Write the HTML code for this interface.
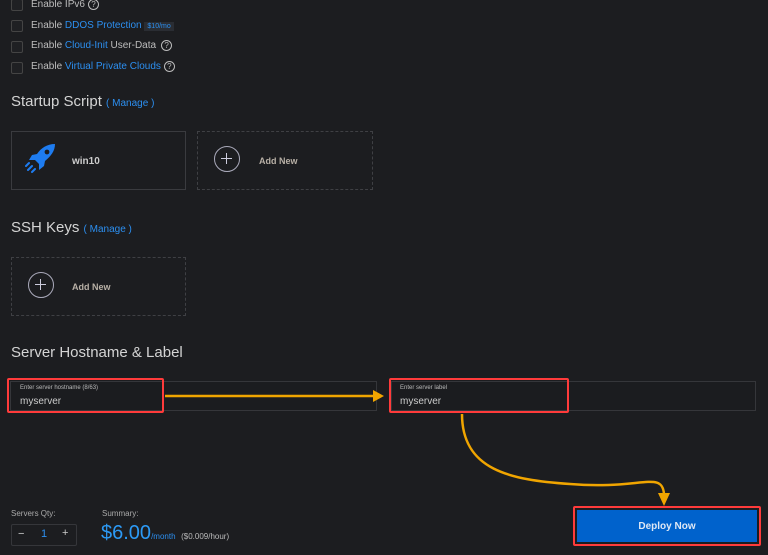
<!DOCTYPE html>
<html><head><meta charset="utf-8"><style>
*{box-sizing:border-box;margin:0;padding:0}
body{width:768px;height:555px;background:#1c1d20;font-family:"Liberation Sans",sans-serif;color:#c9c9c9;position:relative;overflow:hidden}
.a{position:absolute}
.cb{position:absolute;left:11px;width:12px;height:12px;border:1px solid #444;border-radius:2px;background:#1f2023}
.lbl{position:absolute;left:31px;font-size:10px;color:#bdbdbd;white-space:nowrap}
.blue{color:#2c8ff0}
.q{display:inline-block;width:11px;height:11px;border:1px solid #bbb;border-radius:50%;font-size:8px;text-align:center;line-height:9px;vertical-align:middle;margin-left:3px}
h2{position:absolute;left:11px;font-size:15px;font-weight:normal;color:#d4d4d4;white-space:nowrap}
h2 span{font-size:10px;color:#2c8ff0}
.card{position:absolute;border:1px solid #3a3b3f}
.dash{border:1px dashed #3f4044}
.plus{position:absolute;width:26px;height:26px;border:1.5px solid #aab;border-radius:50%}
.plus:before{content:"";position:absolute;left:6px;top:11px;width:11px;height:1.3px;background:#ccd}
.plus:after{content:"";position:absolute;left:11px;top:6px;width:1.3px;height:11px;background:#ccd}
.an{position:absolute;font-size:9px;font-weight:bold;color:#b8b0a6}
.inp{position:absolute;border:1px solid #35363a;background:#1b1c1f}
.red{position:absolute;border:2px solid #ff3b3b;border-radius:2px}
.sl{position:absolute;font-size:6px;color:#bbb}
.sv{position:absolute;font-size:10px;color:#ccc}
</style></head><body>
<div class="cb" style="top:-1px"></div><div class="lbl" style="top:-1px">Enable IPv6<span class="q">?</span></div>
<div class="cb" style="top:20px"></div><div class="lbl" style="top:20px">Enable <span class="blue">DDOS Protection</span> <span style="font-size:7px;background:#2a2d33;color:#2c8ff0;padding:1px 3px">$10/mo</span></div>
<div class="cb" style="top:41px"></div><div class="lbl" style="top:40px">Enable <span class="blue">Cloud-Init</span> User-Data<span class="q" style="margin-left:5px">?</span></div>
<div class="cb" style="top:62px"></div><div class="lbl" style="top:61px">Enable <span class="blue">Virtual Private Clouds</span><span class="q">?</span></div>

<h2 style="top:93px">Startup Script <span>( Manage )</span></h2>
<div class="card" style="left:11px;top:131px;width:175px;height:59px"></div>
<svg class="a" style="left:25px;top:143px" width="32" height="30" viewBox="0 0 32 30"><path d="M30 1 C22 1 16 5 12 11 L7 12 L4 17 L10 17 L14 21 L14 27 L19 23 L20 18 C26 13 30 8 30 1Z" fill="#1e7cf0"/><circle cx="22" cy="9" r="2.4" fill="#1c1d20"/><path d="M3 27 L7 23 M7 29 L10 26 M1 23 L4 20" stroke="#1e7cf0" stroke-width="2" stroke-linecap="round"/></svg>
<div class="a" style="left:72px;top:156px;font-size:10px;font-weight:bold;color:#ccc">win10</div>
<div class="card dash" style="left:197px;top:131px;width:176px;height:59px"></div>
<div class="plus" style="left:214px;top:146px"></div><div class="an" style="left:259px;top:156px">Add New</div>

<h2 style="top:219px">SSH Keys <span>( Manage )</span></h2>
<div class="card dash" style="left:11px;top:257px;width:175px;height:59px"></div>
<div class="plus" style="left:28px;top:272px"></div><div class="an" style="left:72px;top:282px">Add New</div>

<h2 style="top:344px">Server Hostname &amp; Label</h2>
<div class="inp" style="left:10px;top:381px;width:367px;height:30px"></div>
<div class="inp" style="left:391px;top:381px;width:365px;height:30px"></div>
<div class="red" style="left:7px;top:378px;width:157px;height:35px"></div>
<div class="red" style="left:389px;top:378px;width:180px;height:35px"></div>
<div class="sl" style="left:20px;top:385px">Enter server hostname (8/63)</div>
<div class="sv" style="left:20px;top:396px">myserver</div>
<div class="sl" style="left:400px;top:385px">Enter server label</div>
<div class="sv" style="left:400px;top:396px">myserver</div>
<svg class="a" style="left:0;top:0" width="768" height="555"><g stroke="#f0a500" stroke-width="2.5" fill="none"><path d="M165 396 L374 396"/><path d="M462 414 C462 470 510 480 570 484 C640 490 662 470 664 494"/></g><path d="M664 506 L658 493 L670 493Z" fill="#f0a500"/><path d="M384 396 L373 390 L373 402Z" fill="#f0a500"/></svg>

<div class="a" style="left:11px;top:509px;font-size:8px;color:#aaa">Servers Qty:</div>
<div class="a" style="left:11px;top:524px;width:66px;height:22px;border:1px solid #35363a;border-radius:2px"></div>
<div class="a" style="left:18px;top:528px;font-size:11px;color:#ccc">−</div>
<div class="a" style="left:41px;top:528px;font-size:11px;color:#2c8ff0">1</div>
<div class="a" style="left:62px;top:527px;font-size:11px;color:#ccc">+</div>
<div class="a" style="left:102px;top:509px;font-size:8px;color:#aaa">Summary:</div>
<div class="a" style="left:101px;top:522px;font-size:20px;color:#2c9af5;white-space:nowrap">$6.00<span style="font-size:8px;color:#2c8ff0">/month</span> <span style="font-size:8px;color:#bbb">($0.009/hour)</span></div>

<div class="red" style="left:573px;top:506px;width:188px;height:40px"></div>
<div class="a" style="left:577px;top:510px;width:180px;height:32px;background:#0062cc;color:#dfe8f5;font-size:10px;font-weight:bold;text-align:center;line-height:34px">Deploy Now</div>
</body></html>
